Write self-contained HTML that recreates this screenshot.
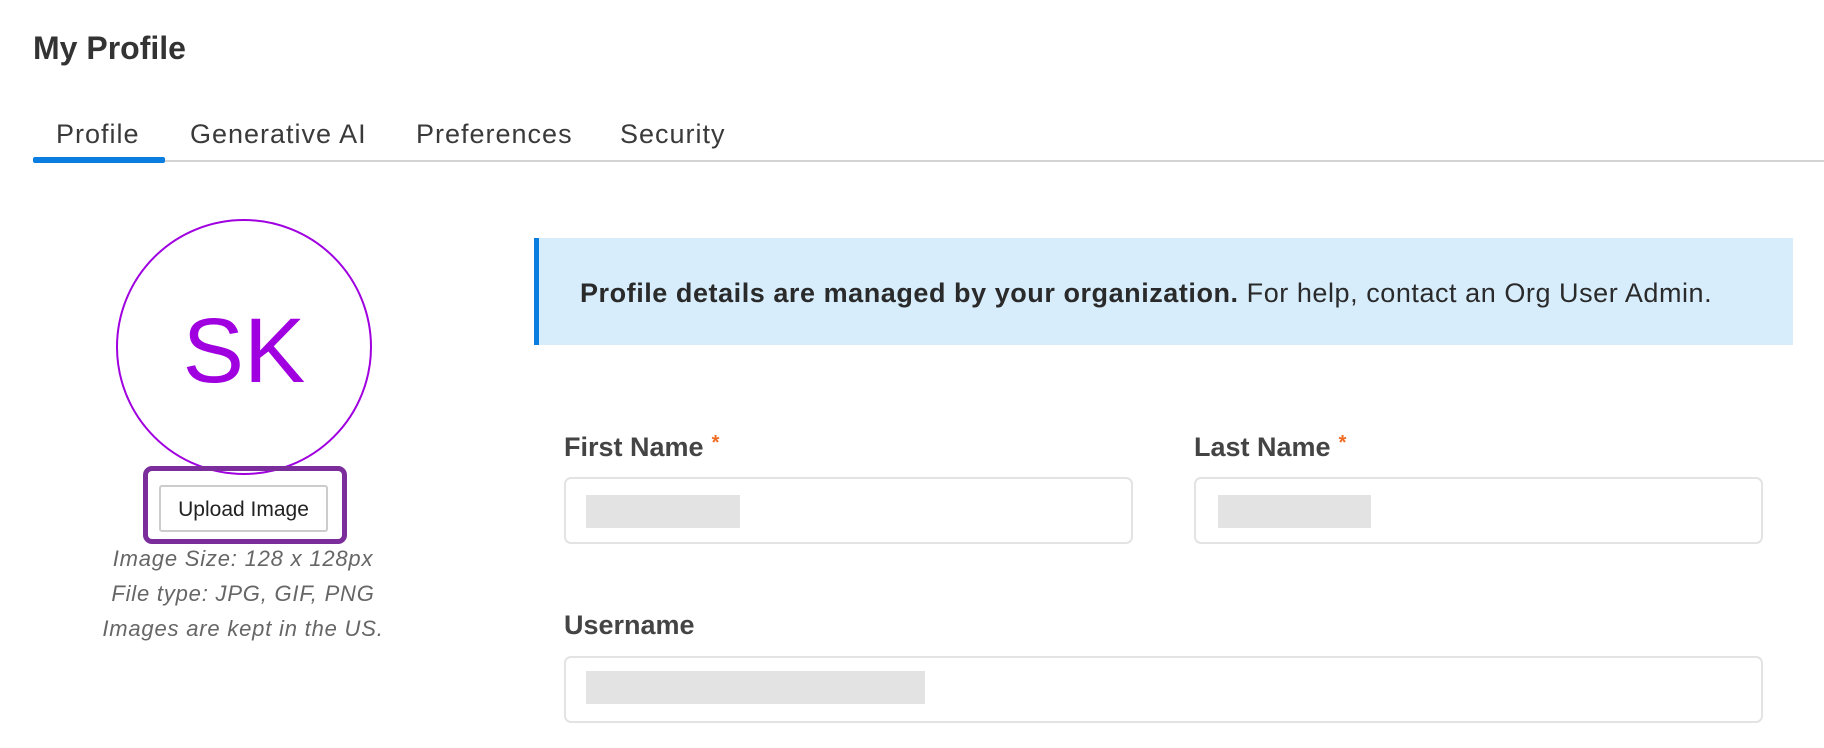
<!DOCTYPE html>
<html><head><meta charset="utf-8"><style>
*{margin:0;padding:0;box-sizing:border-box}
body{width:1824px;height:748px;background:#fff;font-family:"Liberation Sans",sans-serif;color:#333;position:relative;overflow:hidden}
.a{position:absolute;white-space:nowrap}
.tab{font-size:27px;color:#3a3a3a;top:119px;letter-spacing:1px}
.lbl{font-size:27px;font-weight:bold;color:#444}
.lbl span{color:#f06a1f;font-size:20px;vertical-align:top;margin-left:8px}
.inp{position:absolute;border:2px solid #e3e3e3;border-radius:7px;background:#fff}
.ph{position:absolute;background:#e3e3e3}
.help{font-size:22px;font-style:italic;color:#666;width:400px;text-align:center;left:43px;letter-spacing:0.8px}
</style></head><body>
<div class="a" style="left:33px;top:30px;font-size:32px;font-weight:bold;color:#333">My Profile</div>
<div class="a tab" style="left:56px">Profile</div>
<div class="a tab" style="left:190px">Generative AI</div>
<div class="a tab" style="left:416px">Preferences</div>
<div class="a tab" style="left:620px">Security</div>
<div class="a" style="left:33px;top:160px;width:1791px;height:2px;background:#d4d4d4"></div>
<div class="a" style="left:33px;top:157px;width:132px;height:6px;background:#0a7de0;border-radius:2px"></div>

<div class="a" style="left:116px;top:219px;width:256px;height:256px;border:2px solid #a000e0;border-radius:50%"></div>
<div class="a" style="left:116px;top:301px;width:256px;text-align:center;font-size:92px;color:#a000e0;line-height:100px">SK</div>
<div class="a" style="left:143px;top:466px;width:204px;height:78px;border:5px solid #7b2d9b;border-radius:9px"></div>
<div class="a" style="left:159px;top:485px;width:169px;height:47px;border:2px solid #ccc;border-radius:3px;background:#fff;font-size:21px;text-align:center;line-height:45px;color:#222">Upload Image</div>
<div class="a help" style="top:546px">Image Size: 128 x 128px</div>
<div class="a help" style="top:581px">File type: JPG, GIF, PNG</div>
<div class="a help" style="top:616px">Images are kept in the US.</div>

<div class="a" style="left:534px;top:238px;width:1259px;height:107px;background:#d7edfc;border-left:5px solid #0a7de0"></div>
<div class="a" style="left:580px;top:278px;font-size:27px;color:#2a2a2a;letter-spacing:0.55px"><b>Profile details are managed by your organization.</b> For help, contact an Org User Admin.</div>

<div class="a lbl" style="left:564px;top:432px">First Name<span>*</span></div>
<div class="a lbl" style="left:1194px;top:432px">Last Name<span>*</span></div>
<div class="inp" style="left:564px;top:477px;width:569px;height:67px"></div>
<div class="inp" style="left:1194px;top:477px;width:569px;height:67px"></div>
<div class="ph" style="left:586px;top:495px;width:154px;height:33px"></div>
<div class="ph" style="left:1218px;top:495px;width:153px;height:33px"></div>
<div class="a lbl" style="left:564px;top:610px">Username</div>
<div class="inp" style="left:564px;top:656px;width:1199px;height:67px"></div>
<div class="ph" style="left:586px;top:671px;width:339px;height:33px"></div>
</body></html>
